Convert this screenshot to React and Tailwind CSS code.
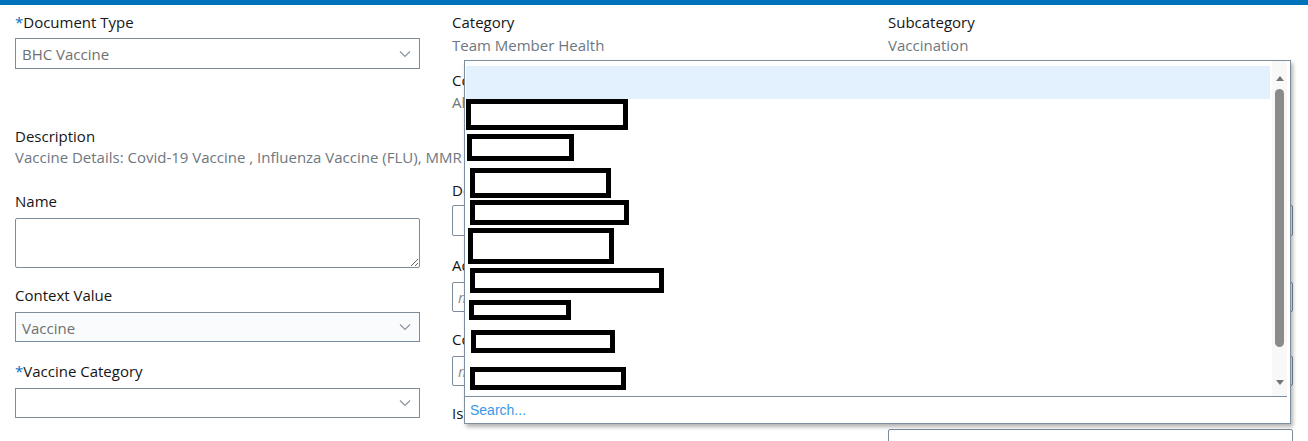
import React from 'react';

const Chevron = () => (
    <svg width="12" height="8" viewBox="0 0 12 8" fill="none" className="shrink-0">
        <polyline points="1,1.5 6,6.5 11,1.5" stroke="#8a949e" strokeWidth="1.2" />
    </svg>
);

const Label = ({ children, required }) => (
    <div className="text-[15px] leading-5 text-[#161616] whitespace-nowrap">
        {required && <span className="text-[#0a6fc2]">*</span>}
        {children}
    </div>
);

const Value = ({ children }) => (
    <div className="text-[15px] leading-5 text-[#6e7780]">{children}</div>
);

const SelectBox = ({ value, disabled, h }) => (
    <div className={`${h} w-full border border-[#7d8c9b] flex items-center justify-between pl-[6px] pr-[8px] ${disabled ? 'bg-[#fafbfd]' : 'bg-white'}`}>
        <span className="text-[15px] leading-5 pt-[1px] text-[#6f6f6f]">{value}</span>
        <Chevron />
    </div>
);

const TextInput = ({ placeholder, h = 'h-[31px]' }) => (
    <div className={`${h} w-full border border-[#7d8c9b] rounded-[2px] bg-white flex items-center pl-[5px]`}>
        {placeholder && <span className="italic text-[15px] text-[#8a8a8a]">{placeholder}</span>}
    </div>
);

// black redaction boxes over the option text
const options = [
    { top: 'mt-0', h: 'h-[31px]', w: 'w-[162px]', ml: 'ml-0' },
    { top: 'mt-[2px]', h: 'h-[27px]', w: 'w-[107px]', ml: 'ml-[1px]' },
    { top: 'mt-[3px]', h: 'h-[30px]', w: 'w-[141px]', ml: 'ml-[4px]' },
    { top: 'mt-[2px]', h: 'h-[25px]', w: 'w-[159px]', ml: 'ml-[4px]' },
    { top: '-mt-[3px]', h: 'h-[36px]', w: 'w-[146px]', ml: 'ml-[2px]' },
    { top: 'mt-[4px]', h: 'h-[25px]', w: 'w-[194px]', ml: 'ml-[4px]' },
    { top: 'mt-[3px]', h: 'h-[20px]', w: 'w-[102px]', ml: 'ml-[3px]' },
    { top: 'mt-0', h: 'h-[23px]', w: 'w-[144px]', ml: 'ml-[5px]' },
    { top: 'mt-[4px]', h: 'h-[23px]', w: 'w-[156px]', ml: 'ml-[4px]' },
];

export default function App() {
    return (
        <div className="relative w-[1308px] h-[441px] overflow-hidden bg-white font-['Open_Sans',sans-serif]">
            <div className="h-[5px] bg-[#0072bc]" />

            <div className="flex pl-[15px] pt-[7px]">
                {/* left column */}
                <div className="w-[405px] flex flex-col">
                    <Label required>Document Type</Label>
                    <div className="mt-[6px]"><SelectBox value="BHC Vaccine" h="h-[31px]" /></div>
                    <div className="mt-[57px]"><Label>Description</Label></div>
                    <div className="mt-[1px] whitespace-nowrap text-[15px] leading-5 text-[#6e7780]">Vaccine Details: Covid-19 Vaccine , Influenza Vaccine (FLU), MMR Vaccine</div>
                    <div className="mt-[24px]"><Label>Name</Label></div>
                    <textarea className="mt-[7px] h-[50px] w-full border border-[#7d8c9b] rounded-[2px] bg-white outline-none" />
                    <div className="mt-[17px]"><Label>Context Value</Label></div>
                    <div className="mt-[7px]"><SelectBox value="Vaccine" disabled h="h-[30px]" /></div>
                    <div className="mt-[19px]"><Label required>Vaccine Category</Label></div>
                    <div className="mt-[7px]"><SelectBox value="" h="h-[30px]" /></div>
                    <div className="mt-[22px]"><Label required>Vaccine Name</Label></div>
                </div>

                {/* middle + right columns */}
                <div className="ml-[32px] w-[841px] flex flex-col">
                    <div className="grid grid-cols-[405px_405px] gap-x-[31px]">
                        <div>
                            <Label>Category</Label>
                            <div className="mt-[3px]"><Value>Team Member Health</Value></div>
                        </div>
                        <div>
                            <Label>Subcategory</Label>
                            <div className="mt-[3px]"><Value>Vaccination</Value></div>
                        </div>
                    </div>
                    <div className="mt-[15px]"><Label>Country</Label></div>
                    <div className="mt-[2px]"><Value>All</Value></div>
                    <div className="mt-[68px]"><Label>Document Date</Label></div>
                    <div className="mt-[5px]"><TextInput /></div>
                    <div className="mt-[19px]"><Label>Administered Date</Label></div>
                    <div className="mt-[7px]"><TextInput placeholder="mm/dd/yyyy" h="h-[30px]" /></div>
                    <div className="mt-[17px]"><Label>Completed Date</Label></div>
                    <div className="mt-[7px]"><TextInput placeholder="mm/dd/yyyy" h="h-[30px]" /></div>
                    <div className="mt-[17px] grid grid-cols-[405px_405px] gap-x-[31px]">
                        <div><Label>Is Booster</Label></div>
                        <div>
                            <Label>Lot Number</Label>
                            <div className="mt-[6px]"><TextInput /></div>
                        </div>
                    </div>
                </div>
            </div>

            {/* open dropdown list */}
            <div className="absolute left-[464px] top-[60px] w-[827px] h-[364px] bg-white border border-[#7d8e9e] shadow-[2px_3px_4px_rgba(0,0,0,0.3)] flex flex-col">
                <div className="flex h-[335px]">
                    <div className="flex-1 pt-[5px] pl-[1px] pr-[2px] overflow-hidden">
                        <div className="h-[33px] bg-[#e3f0fd]" />
                        {options.map((o, idx) => (
                            <div key={idx} className="h-[33px] flex items-start">
                                <div className={`${o.top} ${o.ml} ${o.h} ${o.w} border-[5px] border-black bg-white`} />
                            </div>
                        ))}
                    </div>
                    <div className="w-[15px] bg-[#f8f8f8] flex flex-col items-center pt-[15px] pb-[11px] mr-[3px]">
                        <svg width="8" height="5" viewBox="0 0 8 5"><polygon points="0,5 4,0 8,5" fill="#757575" /></svg>
                        <div className="mt-[8px] w-[9px] h-[258px] rounded-full bg-[#8b8b8b]" />
                        <div className="flex-1" />
                        <svg width="8" height="5" viewBox="0 0 8 5"><polygon points="0,0 8,0 4,5" fill="#757575" /></svg>
                    </div>
                </div>
                <div className="border-t border-[#7d8e9e] mr-[3px] flex-1 flex items-center pl-[5px]">
                    <span className="font-['Liberation_Sans',Arial,sans-serif] text-[14px] text-[#3a96e6]">Search...</span>
                </div>
            </div>
        </div>
    );
}
